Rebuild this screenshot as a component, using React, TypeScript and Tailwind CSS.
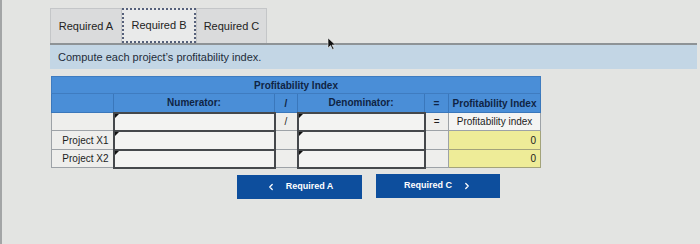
import React from 'react';
import { ChevronLeft, ChevronRight } from 'lucide-react';

function InputCell() {
  return (
    <td className="relative border-2 border-[#45484c] bg-[#f3f3f2] p-0">
      {/* little marker in the corner */}
      <span className="absolute left-0 top-0 h-0 w-0 border-l-[4px] border-b-[4px] border-l-[#111] border-b-transparent" />
    </td>
  );
}

function PlainCell({ children, className = '' }: { children?: React.ReactNode; className?: string }) {
  return <td className={`border border-[#9da2a7] bg-[#eeeeec] px-1 ${className}`}>{children}</td>;
}

export default function App() {
  const font = { fontFamily: '"Liberation Sans", Arial, sans-serif' };

  return (
    <div className="relative h-[244px] w-[700px] overflow-hidden border-l-[2px] border-[#a3a5a6] bg-[#e3e4e2] pt-[8px]" style={font}>
      {/* tabs */}
      <div className="ml-[48px] flex h-[35px] text-[11px] text-[#222]">
        <div className="flex w-[72px] items-center justify-center border border-b-0 border-[#c4c6c8] bg-[#dadbdc]">Required A</div>
        <div className="flex w-[74px] items-center justify-center border-2 border-dotted border-[#55607a] bg-[#e9eaea]">Required B</div>
        <div className="flex w-[71px] items-center justify-center border border-b-0 border-[#c4c6c8] bg-[#dadbdc]">Required C</div>
      </div>

      {/* instruction bar */}
      <div className="ml-[48px] mr-[3px] flex h-[26px] items-center border-t-2 border-[#8e9396] bg-[#c3d6e5] pl-[8px] text-[11px] text-[#1e2c3a]">
        Compute each project’s profitability index.
      </div>

      {/* table */}
      <table className="ml-[49px] mt-[7px] w-[489px] table-fixed border-collapse text-[10px] text-[#1c1c1c]">
        <colgroup>
          <col className="w-[62px]" />
          <col className="w-[161px]" />
          <col className="w-[23px]" />
          <col className="w-[127px]" />
          <col className="w-[24px]" />
          <col className="w-[92px]" />
        </colgroup>
        <tbody>
          <tr className="h-[17px] bg-[#4a8ed7]">
            <td colSpan={6} className="border border-[#3f7cc0] text-center font-bold text-[#0f2444]">
              Profitability Index
            </td>
          </tr>
          <tr className="h-[19px] bg-[#4a8ed7] font-bold text-[#0f2444]">
            <td className="border border-[#3a77bb]" />
            <td className="border border-[#3a77bb] text-center">Numerator:</td>
            <td className="border border-[#3a77bb] text-center">/</td>
            <td className="border border-[#3a77bb] text-center">Denominator:</td>
            <td className="border border-[#3a77bb] text-center">=</td>
            <td className="border border-[#3a77bb] text-center">Profitability Index</td>
          </tr>
          <tr className="h-[18px]">
            <PlainCell />
            <InputCell />
            <PlainCell className="text-center">/</PlainCell>
            <InputCell />
            <PlainCell className="text-center">=</PlainCell>
            <td className="border border-[#9da2a7] bg-[#f4f4f3] text-center">Profitability index</td>
          </tr>
          {['Project X1', 'Project X2'].map((name, i) => (
            <tr key={name} className={i === 0 ? 'h-[19px]' : 'h-[18px]'}>
              <PlainCell className="text-right">{name}</PlainCell>
              <InputCell />
              <PlainCell />
              <InputCell />
              <PlainCell />
              <td className="border border-[#a3a37a] bg-[#eeec98] px-1 text-right">0</td>
            </tr>
          ))}
        </tbody>
      </table>

      {/* nav buttons */}
      <div className="ml-[235px] mt-[6px] flex gap-[14px] text-[9px] font-bold text-white">
        <button className="flex h-[24px] w-[125px] items-center justify-center gap-[10px] bg-[#0d4e9d]">
          <ChevronLeft size={10} strokeWidth={3} />
          Required A
        </button>
        <button className="-mt-[1px] flex h-[24px] w-[124px] items-center justify-center gap-[10px] bg-[#0d4e9d]">
          Required C
          <ChevronRight size={10} strokeWidth={3} />
        </button>
      </div>

      {/* mouse pointer */}
      <svg className="absolute left-[325px] top-[37px]" width="9" height="13" viewBox="0 0 9 13">
        <path d="M1 1 L1 11 L3.5 8.5 L5.5 12.5 L7 11.8 L5 8 L8.5 8 Z" fill="#111" stroke="#eee" strokeWidth="0.6" />
      </svg>
    </div>
  );
}
